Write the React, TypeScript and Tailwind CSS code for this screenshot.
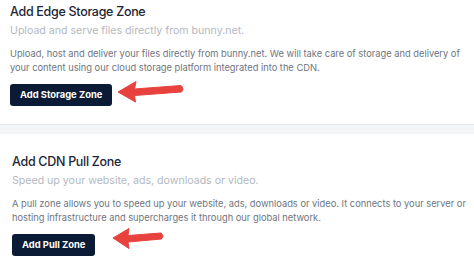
import React from "react";

type Zone = {
  title: string;
  subtitle: string;
  body: string;
  button: string;
  pad: string;
  arrow: "long" | "short";
};

const ZONES: Zone[] = [
  {
    title: "Add Edge Storage Zone",
    subtitle: "Upload and serve files directly from bunny.net.",
    body: "Upload, host and deliver your files directly from bunny.net. We will take care of storage and delivery of your content using our cloud storage platform integrated into the CDN.",
    button: "Add Storage Zone",
    pad: "pl-[10px] pr-[6px]",
    arrow: "long",
  },
  {
    title: "Add CDN Pull Zone",
    subtitle: "Speed up your website, ads, downloads or video.",
    body: "A pull zone allows you to speed up your website, ads, downloads or video. It connects to your server or hosting infrastructure and supercharges it through our global network.",
    button: "Add Pull Zone",
    pad: "pl-[12px] pr-[4px]",
    arrow: "short",
  },
];

function Arrow({ kind }: { kind: "long" | "short" }) {
  if (kind === "long") {
    return (
      <svg width="68" height="24" viewBox="0 0 68 24" className="self-start -mt-[4px] ml-[5px] shrink-0">
        <path
          d="M1 12 L19 1.5 L17.5 9 L64 5.5 Q67.5 8.5 64.5 12 L17.5 15.5 L18.5 22 Z"
          fill="#e8423f"
          stroke="#e8423f"
          strokeWidth="1"
          strokeLinejoin="round"
        />
      </svg>
    );
  }
  return (
    <svg width="54" height="23" viewBox="0 0 54 23" className="self-start -mt-[7px] ml-[17px] shrink-0">
      <path
        d="M1 11 L17 1.5 L16 8.5 L49 6 Q52.5 9 49.5 12 L16 15 L17 21.5 Z"
        fill="#e8423f"
        stroke="#e8423f"
        strokeWidth="1"
        strokeLinejoin="round"
      />
    </svg>
  );
}

function ZoneCard({ zone }: { zone: Zone }) {
  return (
    <section className={`bg-white border-b border-[#e6e7ea] pt-[18px] pb-[18px] ${zone.pad}`}>
      <h2 className="text-[12.5px] leading-[20px] font-medium tracking-[-0.3px] text-[#1e2636]">{zone.title}</h2>
      <p className="mt-[2px] text-[10.6px] leading-[14px] text-[#b3b8c0]">{zone.subtitle}</p>
      <p className="mt-[9px] text-[9.3px] leading-[14px] text-[#6e7581]">{zone.body}</p>
      <div className="mt-[9px] flex items-center">
        <button className="h-[22px] rounded-[3px] bg-[#0c1b35] px-[10px] text-[9.4px] font-bold text-white">
          {zone.button}
        </button>
        <Arrow kind={zone.arrow} />
      </div>
    </section>
  );
}

export default function App() {
  return (
    <div
      className="w-[474px] h-[262px] overflow-hidden bg-[#f4f5f6]"
      style={{ fontFamily: "Inter, 'Noto Sans', sans-serif" }}
    >
      <div className="-mt-[16px] flex flex-col gap-[9px]">
        {ZONES.map((z) => (
          <ZoneCard key={z.title} zone={z} />
        ))}
      </div>
    </div>
  );
}
